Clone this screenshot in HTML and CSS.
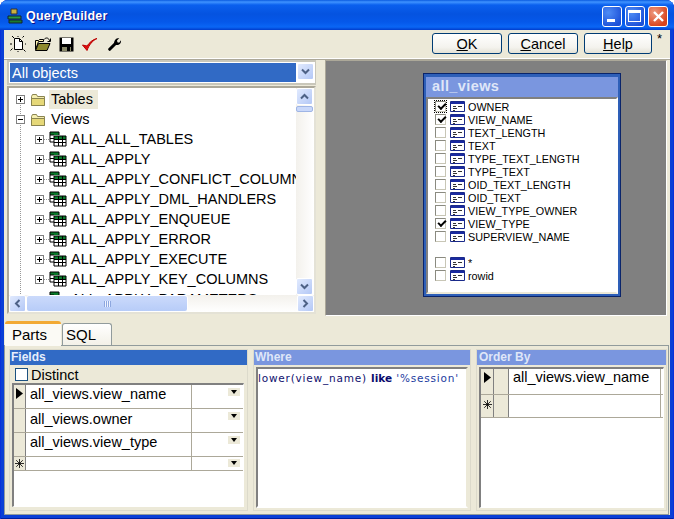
FILE: index.html
```html
<!DOCTYPE html>
<html lang="en">
<head>
<meta charset="utf-8">
<title>QueryBuilder</title>
<link rel="stylesheet" href="styles.css">
</head>
<body>
<svg class="defs" width="0" height="0">
  <symbol id="tbl" viewBox="0 0 18 16">
    <path d="M1 1h9v3h7v11H5v-4H1z" fill="#fff"/>
    <path d="M1 1h9v3H1z" fill="#0a7a2a"/>
    <path d="M5 5h12v3H5z" fill="#0a7a2a"/>
    <path d="M1 1h9v3M1 1v10h4M1 4h4M1 7.500h4M5 5h12v10H5zM5 8.500h12M5 11.500h12M9.500 5v10M13.500 5v10" fill="none" stroke="#000"/>
  </symbol>
  <symbol id="folder" viewBox="0 0 16 13">
    <path d="M1.500 3.500l1-2h4l1 2h7v9h-13z" fill="#f4eeb0" stroke="#8a8450"/>
    <path d="M1.500 5.500h13v7h-13z" fill="#e6d878" stroke="#8a8450"/>
  </symbol>
  <symbol id="fld" viewBox="0 0 15 11">
    <path d="M.5.500h14v10H.5z" fill="#fff" stroke="#1a2a8a"/>
    <path d="M1 1h13v2H1z" fill="#1a2aa0"/>
    <path d="M3 5.500h3M8 5.500h4M3 7.500h4M3 9.500h2" stroke="#333"/>
  </symbol>
  <symbol id="arr" viewBox="0 0 7 11"><path d="M0 0l7 5.500L0 11z" fill="#000"/></symbol>
  <symbol id="star" viewBox="0 0 11 11"><path d="M5.500 0v11M0 5.500h11M1.500 1.500l8 8M9.500 1.500l-8 8" stroke="#000" fill="none"/></symbol>
  <symbol id="chev" viewBox="0 0 9 7"><path d="M1 1.500l3.500 3.500L8 1.500" fill="none" stroke="#4d6185" stroke-width="2"/></symbol>
</svg>
<div class="window">
  <header class="titlebar">
    <svg class="appicon" width="16" height="16" viewBox="0 0 16 16"><path d="M4 1h6v5H4z" fill="#c9b040" stroke="#333"/><path d="M1 8h13v3H1z" fill="#2a9a40" stroke="#123"/><path d="M2 12h13v3H2z" fill="#1c7a30" stroke="#123"/></svg>
    <span class="title">QueryBuilder</span>
    <span class="capbtn capmin"><i class="minbar"></i></span>
    <span class="capbtn capmax"><i class="maxbox"></i></span>
    <span class="capbtn capclose">
      <svg width="13" height="13" viewBox="0 0 13 13"><path d="M2 2l9 9M11 2l-9 9" stroke="#fff" stroke-width="2.400"/></svg>
    </span>
  </header>
  <div class="client">
    <div class="toolbar">
      <div class="tools">
        <svg width="18" height="18" viewBox="0 0 18 18"><path d="M5.500 3.500h5l3 3v8h-8z" fill="#fff" stroke="#000"/><path d="M10.500 3.500v3h3" fill="none" stroke="#000"/><path d="M3 1l2 2M1 9h2M1.500 15.500l2-2M9 1v1M15 1l-1.500 1.500M16 9h1M14.500 14.500l2 2M9 16v1" stroke="#000"/></svg>
        <svg width="18" height="16" viewBox="0 0 18 16"><path d="M1.500 4.500h3l1-1h4v2h-5l-3 8z" fill="#fff3b0" stroke="#000"/><path d="M1.500 14.500l3-7h11.500l-3 7z" fill="#8f8a2e" stroke="#000"/><path d="M10 3.500c1.500-2 4-2 5 0l1 1.500M16.500 2.500v3h-3" fill="none" stroke="#000"/></svg>
        <svg width="15" height="15" viewBox="0 0 15 15"><path d="M.5.500h14v14H.5z" fill="#000"/><path d="M3 1h9v6H3z" fill="#fff"/><path d="M3 10h9v4H3z" fill="#8a8a6a"/><path d="M8 10h3v4H8z" fill="#000"/></svg>
        <svg width="17" height="15" viewBox="0 0 17 15"><path d="M1.500 8l4.500 5.500C8 8 11.500 3.500 16 1.500 11.500 2.500 8.500 5.500 6 9z" fill="#e01010" stroke="#b00" /></svg>
        <svg class="wrench" width="14" height="14" viewBox="0 0 14 14"><path d="M1.700 12.300l5.500-5.600" fill="none" stroke="#000" stroke-width="3" stroke-linecap="round"/><path d="M6.500 7.500c-1.200-3 .8-6.500 4.800-6.500l-2.300 2.500.4 1.700 1.700.5L13 3.300c.6 3.800-3 5.800-6.500 4.200z" fill="#000"/></svg>
      </div>
      <div class="actions">
        <button class="xpbtn btn-ok"><u>O</u>K</button>
        <button class="xpbtn btn-cancel"><u>C</u>ancel</button>
        <button class="xpbtn btn-help"><u>H</u>elp</button>
        <span class="modmark">*</span>
      </div>
    </div>
    <div class="top">
      <section class="leftpane">
        <div class="combo">
          <div class="combotext">All objects</div>
          <span class="sbtn combobtn"><svg width="9" height="7"><use href="#chev"/></svg></span>
        </div>
        <div class="treebox">
          <div class="treemain">
            <ul class="tree">
              <li class="root root-first"><i class="pm plus"></i><svg width="16" height="13"><use href="#folder"/></svg><span class="rootsel">Tables</span></li>
              <li class="root root-open"><i class="pm"></i><svg width="16" height="13"><use href="#folder"/></svg><span class="rootlbl">Views</span></li>
              <li class="leaf"><i class="pm plus"></i><svg width="18" height="16"><use href="#tbl"/></svg><span>ALL_ALL_TABLES</span></li>
              <li class="leaf"><i class="pm plus"></i><svg width="18" height="16"><use href="#tbl"/></svg><span>ALL_APPLY</span></li>
              <li class="leaf"><i class="pm plus"></i><svg width="18" height="16"><use href="#tbl"/></svg><span>ALL_APPLY_CONFLICT_COLUMNS</span></li>
              <li class="leaf"><i class="pm plus"></i><svg width="18" height="16"><use href="#tbl"/></svg><span>ALL_APPLY_DML_HANDLERS</span></li>
              <li class="leaf"><i class="pm plus"></i><svg width="18" height="16"><use href="#tbl"/></svg><span>ALL_APPLY_ENQUEUE</span></li>
              <li class="leaf"><i class="pm plus"></i><svg width="18" height="16"><use href="#tbl"/></svg><span>ALL_APPLY_ERROR</span></li>
              <li class="leaf"><i class="pm plus"></i><svg width="18" height="16"><use href="#tbl"/></svg><span>ALL_APPLY_EXECUTE</span></li>
              <li class="leaf"><i class="pm plus"></i><svg width="18" height="16"><use href="#tbl"/></svg><span>ALL_APPLY_KEY_COLUMNS</span></li>
              <li class="leaf"><i class="pm plus"></i><svg width="18" height="16"><use href="#tbl"/></svg><span>ALL_APPLY_PARAMETERS</span></li>
            </ul>
            <div class="vscroll">
              <span class="sbtn"><svg width="9" height="7"><use href="#chev" transform="matrix(1 0 0 -1 0 7)"/></svg></span>
              <span class="vthumb"></span>
              <span class="vtrack"></span>
              <span class="sbtn"><svg width="9" height="7"><use href="#chev"/></svg></span>
            </div>
          </div>
          <div class="hscroll">
            <span class="sbtn"><svg width="7" height="9"><path d="M5.500 1L2 4.500 5.500 8" fill="none" stroke="#4d6185" stroke-width="2"/></svg></span>
            <span class="hthumb"><b></b></span>
            <span class="htrack"></span>
            <span class="sbtn"><svg width="7" height="9"><path d="M1.500 1L5 4.500 1.500 8" fill="none" stroke="#4d6185" stroke-width="2"/></svg></span>
          </div>
        </div>
      </section>
      <section class="canvas">
        <div class="tablewin">
          <div class="tablehead">all_views</div>
          <ul class="fields">
            <li><i class="chk chk-on chk-focus"></i><svg width="15" height="11"><use href="#fld"/></svg><span>OWNER</span></li>
            <li><i class="chk chk-on"></i><svg width="15" height="11"><use href="#fld"/></svg><span>VIEW_NAME</span></li>
            <li><i class="chk"></i><svg width="15" height="11"><use href="#fld"/></svg><span>TEXT_LENGTH</span></li>
            <li><i class="chk"></i><svg width="15" height="11"><use href="#fld"/></svg><span>TEXT</span></li>
            <li><i class="chk"></i><svg width="15" height="11"><use href="#fld"/></svg><span>TYPE_TEXT_LENGTH</span></li>
            <li><i class="chk"></i><svg width="15" height="11"><use href="#fld"/></svg><span>TYPE_TEXT</span></li>
            <li><i class="chk"></i><svg width="15" height="11"><use href="#fld"/></svg><span>OID_TEXT_LENGTH</span></li>
            <li><i class="chk"></i><svg width="15" height="11"><use href="#fld"/></svg><span>OID_TEXT</span></li>
            <li><i class="chk"></i><svg width="15" height="11"><use href="#fld"/></svg><span>VIEW_TYPE_OWNER</span></li>
            <li><i class="chk chk-on"></i><svg width="15" height="11"><use href="#fld"/></svg><span>VIEW_TYPE</span></li>
            <li><i class="chk"></i><svg width="15" height="11"><use href="#fld"/></svg><span>SUPERVIEW_NAME</span></li>
            <li class="spacer"></li>
            <li><i class="chk"></i><svg width="15" height="11"><use href="#fld"/></svg><span>*</span></li>
            <li><i class="chk"></i><svg width="15" height="11"><use href="#fld"/></svg><span>rowid</span></li>
          </ul>
        </div>
      </section>
    </div>
    <nav class="tabs">
      <span class="tab tab-on">Parts</span>
      <span class="tab">SQL</span>
    </nav>
    <div class="parts">
      <section class="panel panel-fields">
        <h2 class="phead phead-on">Fields</h2>
        <div class="pbody">
          <label class="distinct"><i class="dbox"></i>Distinct</label>
          <div class="gridbox">
            <div class="frow frow-first"><span class="ind"><svg width="7" height="11"><use href="#arr"/></svg></span><span class="fcell">all_views.view_name</span><span class="fcombo"><i class="ddbtn"></i></span></div>
            <div class="frow"><span class="ind"></span><span class="fcell fcell-mid">all_views.owner</span><span class="fcombo"><i class="ddbtn"></i></span></div>
            <div class="frow"><span class="ind"></span><span class="fcell">all_views.view_type</span><span class="fcombo"><i class="ddbtn"></i></span></div>
            <div class="frow frow-new"><span class="ind"><svg width="9" height="9" viewBox="0 0 11 11"><use href="#star"/></svg></span><span class="fcell"></span><span class="fcombo"><i class="ddbtn ddbtn-new"></i></span></div>
          </div>
        </div>
      </section>
      <section class="panel panel-where">
        <h2 class="phead">Where</h2>
        <div class="pbody wherebody">
          <div class="sqlbox"><span class="fn">lower(view_name)</span> <b class="kw">like</b> <span class="str">'%session'</span></div>
        </div>
      </section>
      <section class="panel panel-order">
        <h2 class="phead phead-order">Order By</h2>
        <div class="pbody wherebody">
          <div class="gridbox">
            <div class="orow orow-first"><span class="ind"><svg width="7" height="11"><use href="#arr"/></svg></span><span class="ind"></span><span class="ocell">all_views.view_name</span></div>
            <div class="orow orow-new"><span class="ind ind-star"><svg width="9" height="9" viewBox="0 0 11 11"><use href="#star"/></svg></span><span class="ind"></span><span class="ocell"></span></div>
          </div>
        </div>
      </section>
    </div>
  </div>
</div>
</body>
</html>
```

FILE: styles.css
```css
* { box-sizing: border-box; }
html, body { margin: 0; padding: 0; }
body { width: 674px; height: 519px; overflow: hidden; background: #fff; font-family: "Liberation Sans", Arial, sans-serif; color: #000; }
.defs { position: absolute; }
svg { flex: none; }
ul { list-style: none; margin: 0; padding: 0; }
i { font-style: normal; }
.window { width: 674px; height: 519px; display: flex; flex-direction: column; background: #0a3fd6; border-radius: 8px 8px 0 0; overflow: hidden; padding: 0 4px 4px; box-shadow: inset 1px 0 #0831d9, inset -1px 0 #0831d9, inset 0 -1px #001ea0; }
.titlebar { height: 30px; margin: 0 -4px; padding: 2px 6px 0 7px; flex: none; display: flex; align-items: center; background: linear-gradient(#0a5be0 0, #3f93ff 2px, #0a60ee 5px, #0553e0 14px, #0558ea 22px, #0a66f5 27px, #003ccc 30px); }
.appicon { margin-right: 3px; }
.title { flex: 1; font: bold 12.500px "Liberation Sans", sans-serif; color: #fff; text-shadow: 1px 1px #0f1089; letter-spacing: .2px; }
.capbtn { width: 20px; height: 21px; margin-left: 3px; border: 1px solid #fff; border-radius: 3px; display: flex; flex: none; background: radial-gradient(circle at 30% 30%, #4f8cf5, #1c50d8 80%); }
.minbar { width: 8px; height: 3px; background: #fff; margin: 12px 0 0 4px; }
.maxbox { width: 13px; height: 12px; margin: 3px 0 0 2px; border: 1px solid #fff; border-top-width: 3px; }
.capclose { background: radial-gradient(circle at 30% 30%, #ee9a80, #d8431c 75%); align-items: center; justify-content: center; }
.client { flex: 1; min-height: 0; display: flex; flex-direction: column; background: #ece9d8; }
.toolbar { height: 28px; flex: none; display: flex; align-items: center; padding: 0 4px 0 5px; justify-content: space-between; }
.tools { display: flex; align-items: center; gap: 7px; }
.wrench { margin-left: 3px; }
.actions { display: flex; align-items: flex-start; height: 100%; padding-top: 3px; }
.xpbtn { height: 21px; border: 1px solid #003c74; border-radius: 3px; background: linear-gradient(#fff, #f4f3ee 70%, #e4e2d6); font: 14.500px "Liberation Sans", sans-serif; color: #000; padding: 0; margin-right: 6px; }
.btn-ok { width: 70px; } .btn-cancel { width: 70px; } .btn-help { width: 68px; margin-right: 0; }
.modmark { width: 9px; margin-left: 5px; font-size: 13px; line-height: 12px; }
.top { height: 258px; flex: none; display: flex; padding: 0 3px 0 3px; gap: 9px; border-top: 1px solid #fff; box-shadow: inset 0 1px #aca899; }
.leftpane { width: 309px; flex: none; padding-top: 1px; display: flex; flex-direction: column; padding-bottom: 2px; }
.combo { height: 25px; flex: none; display: flex; border: 2px solid #c9c7ba; border-right-width: 1px; background: #fff; padding: 1px; }
.combotext { flex: 1; background: #316ac5; color: #fff; font-size: 14.500px; line-height: 21px; height: 19px; padding-left: 2px; }
.combobtn { height: 19px; margin-left: 1px; }
.sbtn { width: 17px; height: 17px; flex: none; display: flex; align-items: center; justify-content: center; border: 1px solid #fff; border-radius: 2px; background: linear-gradient(135deg, #e1eafe, #b4c8f6); }
.treebox { flex: 1; min-height: 0; margin-top: 1px; border: 2px solid #aca899; border-color: #aca899 #e4e2d6 #e4e2d6 #aca899; background: #fff; display: flex; flex-direction: column; }
.treemain { flex: 1; min-height: 0; display: flex; }
.tree { flex: 1; min-width: 0; overflow: hidden; background: #fff; padding-top: 1px; }
.tree li { height: 20px; display: flex; align-items: center; white-space: nowrap; font-size: 14.500px; }
.pm { width: 9px; height: 9px; flex: none; border: 1px solid #808080; background: linear-gradient(#000, #000) center / 5px 1px no-repeat, #fff; }
.plus { background: linear-gradient(#000, #000) center / 5px 1px no-repeat, linear-gradient(#000, #000) center / 1px 5px no-repeat, #fff; }
.root { padding-left: 7px; }
.root .pm { margin-right: 5px; }
.root-first { background: repeating-linear-gradient(#999 0 1px, transparent 1px 2px) 11px 10px / 1px 10px no-repeat; }
.root-open { background: repeating-linear-gradient(#999 0 1px, transparent 1px 2px) 11px 0 / 1px 100% no-repeat; }
.rootsel { background: #ece9d8; margin-left: 3px; padding: 0 5px 0 2px; height: 19px; line-height: 19px; }
.rootlbl { margin-left: 3px; padding-left: 2px; }
.leaf { padding-left: 26px; background: repeating-linear-gradient(#999 0 1px, transparent 1px 2px) 11px 0 / 1px 100% no-repeat, repeating-linear-gradient(90deg, #999 0 1px, transparent 1px 2px) 35px 10px / 5px 1px no-repeat; }
.leaf .pm { margin-right: 5px; }
.leaf span { margin-left: 4px; }
.vscroll { width: 18px; flex: none; display: flex; flex-direction: column; background: linear-gradient(90deg, #f3f1ec, #fff); }
.vthumb { width: 17px; height: 6px; margin-top: 1px; flex: none; border: 1px solid #9fb5e5; border-radius: 2px; background: #c9d8fa; }
.vtrack { flex: 1; }
.hscroll { height: 17px; flex: none; display: flex; background: linear-gradient(#f3f1ec, #fff); }
.hthumb { width: 162px; flex: none; margin-left: 0; border: 1px solid #fff; border-radius: 3px; background: linear-gradient(#cbdafb, #b7ccf8); display: flex; align-items: center; justify-content: center; }
.hthumb b { width: 7px; height: 6px; background: repeating-linear-gradient(90deg, #8da7df 0 1px, #eef3ff 1px 2px); }
.htrack { flex: 1; }
.canvas { flex: 1; min-width: 0; margin: 1px 0 0; background: #808080; border: 1px solid #fff; border-color: #aca899 #fff #fff #aca899; padding: 12px 0 0 97px; }
.tablewin { width: 198px; height: 224px; border: 1px solid #0a246a; background: #2e5fb8; padding: 3px 2px 2px; display: flex; flex-direction: column; }
.tablehead { height: 20px; flex: none; background: #7a96df; color: #dfe6f8; font-weight: bold; font-size: 14.500px; letter-spacing: .4px; line-height: 18px; padding-left: 6px; }
.fields { flex: 1; background: #fff; padding: 1px 0 0 7px; border: 2px solid #808080; border-color: #808080 #fff #ece9d8 #808080; }
.fields li { height: 13px; display: flex; align-items: center; font-size: 10.800px; white-space: nowrap; }
.chk { width: 11px; height: 11px; flex: none; margin: 0 4px 0 0; background: #fff; border: 1px solid #c8c6b6; border-top-color: #8a8a80; border-left-color: #8a8a80; position: relative; }
.chk-on::after { content: ""; position: absolute; left: 2px; top: 1px; width: 6px; height: 3px; border: solid #000; border-width: 0 0 2px 2px; transform: rotate(-45deg); }
.chk-focus { outline: 1px dotted #000; }
.fields span { margin-left: 3px; }
.spacer { height: 13px; }
.tabs { height: 29px; flex: none; display: flex; align-items: flex-end; padding: 0 0 0 1px; }
.tab { height: 22px; width: 50px; font-size: 15px; line-height: 22px; padding-left: 3px; border: 1px solid #919b9c; border-bottom: none; border-radius: 3px 3px 0 0; background: linear-gradient(#fff, #f3f1e8); margin-left: 1px; }
.tab-on { width: 56px; height: 25px; margin-left: 0; padding-left: 7px; background: #fbfaf5; border: none; border-top: 3px solid #f2a933; position: relative; top: 1px; line-height: 21px; }
.parts { flex: 1; min-height: 0; display: grid; grid-template-columns: 239px 218px 191px; gap: 5px; padding: 3px 3px 3px 4px; margin: 0 1px 0 0; border: 1px solid #919b9c; background: #ece9d8; }
.panel { display: flex; flex-direction: column; min-height: 0; border: 1px solid #dcdacb; }
.phead { margin: 0; height: 15px; flex: none; font: bold 12px/15px "Liberation Sans", sans-serif; color: #dfe6f8; background: #7a96df; padding-left: 1px; }
.phead-on { background: #316ac5; color: #e8eefc; }
.phead-order { padding-left: 2px; }
.pbody { flex: 1; min-height: 0; display: flex; flex-direction: column; padding: 1px 3px 3px 2px; }
.wherebody { padding: 2px; }
.distinct { height: 17px; flex: none; display: flex; align-items: center; font-size: 14.500px; padding-left: 3px; }
.dbox { width: 13px; height: 13px; border: 1px solid #1c5180; background: #fff; margin-right: 3px; }
.gridbox { flex: 1; min-height: 0; background: #fff; border: 1px solid #808080; border-width: 2px 1px 1px 2px; border-color: #808080 #fff #fff #808080; }
.frow { height: 24px; display: flex; border-bottom: 1px solid #aca899; }
.frow-new { height: 14px; }
.ind { width: 12px; flex: none; background: #ece9d8; border-right: 1px solid #808080; display: flex; align-items: center; justify-content: center; }
.frow-first .ind, .orow-first .ind { align-items: flex-start; padding-top: 3px; }
.fcell { width: 166px; flex: none; font-size: 14.500px; line-height: 18px; padding-left: 4px; border-right: 1px solid #aca899; }
.fcell-mid { padding-top: 1px; }
.fcombo { flex: 1; position: relative; }
.ddbtn { position: absolute; right: 3px; top: 3px; width: 12px; height: 8px; background: #ece9d8; }
.ddbtn-new { top: 2px; }
.ddbtn::after { content: ""; position: absolute; left: 3px; top: 2px; border: 3px solid transparent; border-top: 4px solid #000; border-bottom: none; }
.sqlbox { flex: 1; background: #fff; border: 2px solid #808080; border-color: #808080 #ece9d8 #fff #808080; padding: 1px 0 0 0; font: 10.500px/16px "DejaVu Sans", sans-serif; letter-spacing: .8px; color: #10106e; white-space: pre; }
.kw { color: #0a0a6e; letter-spacing: 0; }
.str { color: #1c3ca0; }
.orow { display: flex; border-bottom: 1px solid #aca899; }
.orow-first { height: 26px; }
.orow-new { height: 23px; }
.orow .ind { width: 13px; }
.orow .ind + .ind { width: 15px; }
.ind-star { padding-bottom: 4px; }
.ocell { width: 152px; flex: none; font-size: 14.500px; line-height: 16px; padding-left: 4px; border-right: 1px solid #aca899; }
```
